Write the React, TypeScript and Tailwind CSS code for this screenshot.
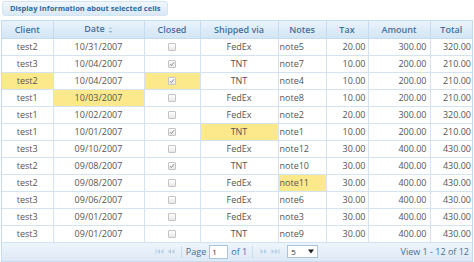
import React from 'react';

type Row = {
  client: string;
  date: string;
  closed: boolean;
  ship: string;
  note: string;
  tax: string;
  amount: string;
  total: string;
  hi?: string[];
};

const rows: Row[] = [
  { client: 'test2', date: '10/31/2007', closed: false, ship: 'FedEx', note: 'note5', tax: '20.00', amount: '300.00', total: '320.00' },
  { client: 'test3', date: '10/04/2007', closed: true, ship: 'TNT', note: 'note7', tax: '10.00', amount: '200.00', total: '210.00' },
  { client: 'test2', date: '10/04/2007', closed: true, ship: 'TNT', note: 'note4', tax: '10.00', amount: '200.00', total: '210.00', hi: ['client', 'closed'] },
  { client: 'test1', date: '10/03/2007', closed: false, ship: 'FedEx', note: 'note8', tax: '10.00', amount: '200.00', total: '210.00', hi: ['date'] },
  { client: 'test1', date: '10/02/2007', closed: false, ship: 'FedEx', note: 'note2', tax: '20.00', amount: '300.00', total: '320.00' },
  { client: 'test1', date: '10/01/2007', closed: true, ship: 'TNT', note: 'note1', tax: '10.00', amount: '200.00', total: '210.00', hi: ['ship'] },
  { client: 'test3', date: '09/10/2007', closed: false, ship: 'FedEx', note: 'note12', tax: '30.00', amount: '400.00', total: '430.00' },
  { client: 'test2', date: '09/08/2007', closed: true, ship: 'TNT', note: 'note10', tax: '30.00', amount: '400.00', total: '430.00' },
  { client: 'test2', date: '09/08/2007', closed: false, ship: 'FedEx', note: 'note11', tax: '30.00', amount: '400.00', total: '430.00', hi: ['note'] },
  { client: 'test3', date: '09/06/2007', closed: false, ship: 'FedEx', note: 'note6', tax: '30.00', amount: '400.00', total: '430.00' },
  { client: 'test3', date: '09/01/2007', closed: false, ship: 'FedEx', note: 'note3', tax: '30.00', amount: '400.00', total: '430.00' },
  { client: 'test3', date: '09/01/2007', closed: false, ship: 'TNT', note: 'note9', tax: '30.00', amount: '400.00', total: '430.00' },
];

const isHi = (r: Row, k: string) => !!r.hi && r.hi.includes(k);

const Check = ({ on }: { on: boolean }) => (
  <span className="inline-flex items-center justify-center w-[8px] h-[8px] border border-[#c4c4c4] rounded-[1px] bg-linear-to-b from-white to-[#e8e8e8] align-middle">
    {on && (
      <svg width="6" height="6" viewBox="0 0 6 6">
        <path d="M1 3.2 L2.4 4.6 L5 1.2" fill="none" stroke="#858585" strokeWidth="1" />
      </svg>
    )}
  </span>
);

const SortIcon = () => (
  <svg width="5" height="8" viewBox="0 0 5 8" className="inline-block ml-[3px] align-middle">
    <path d="M0.5 3 L2.5 1 L4.5 3 Z" fill="#b4cce2" />
    <path d="M0.5 5 L2.5 7 L4.5 5 Z" fill="#8fb3d6" />
  </svg>
);

const SeekFirst = () => (
  <svg width="9" height="7" viewBox="0 0 9 7">
    <rect x="0.5" y="1" width="1" height="5" fill="#b9cfe4" />
    <path d="M5 1 L2 3.5 L5 6 Z" fill="#b9cfe4" />
    <path d="M8.5 1 L5.5 3.5 L8.5 6 Z" fill="#b9cfe4" />
  </svg>
);

const SeekPrev = () => (
  <svg width="8" height="7" viewBox="0 0 8 7">
    <path d="M4 1 L1 3.5 L4 6 Z" fill="#b9cfe4" />
    <path d="M7.5 1 L4.5 3.5 L7.5 6 Z" fill="#b9cfe4" />
  </svg>
);

const SeekNext = () => (
  <svg width="8" height="7" viewBox="0 0 8 7">
    <path d="M0.5 1 L3.5 3.5 L0.5 6 Z" fill="#b9cfe4" />
    <path d="M4 1 L7 3.5 L4 6 Z" fill="#b9cfe4" />
  </svg>
);

const SeekLast = () => (
  <svg width="9" height="7" viewBox="0 0 9 7">
    <path d="M0.5 1 L3.5 3.5 L0.5 6 Z" fill="#b9cfe4" />
    <path d="M4 1 L7 3.5 L4 6 Z" fill="#b9cfe4" />
    <rect x="7.5" y="1" width="1" height="5" fill="#b9cfe4" />
  </svg>
);

const td = 'h-[17px] p-0 border-r border-b border-[#d3e3f1] text-[9px] leading-none text-[#555] whitespace-nowrap overflow-hidden';
const hiBg = 'bg-[#fbe98c]';

export default function App() {
  return (
    <div className="w-[474px] h-[262px] bg-white pl-px pt-px font-['Open_Sans',sans-serif] overflow-hidden">
      <button className="ml-px flex items-center h-[15px] px-[7px] rounded-[3px] border border-[#d3e4f3] bg-linear-to-b from-[#f1f7fd] to-[#d9e8f6] text-[7.5px] font-bold text-[#2d6a9c] leading-none">
        Display Information about selected cells
      </button>

      <div className="mt-[4px] w-[472px] border border-[#c6dbee]">
        <table className="table-fixed border-collapse w-[470px]">
          <colgroup>
            <col className="w-[51px]" />
            <col className="w-[91px]" />
            <col className="w-[56px]" />
            <col className="w-[78px]" />
            <col className="w-[48px]" />
            <col className="w-[42px]" />
            <col className="w-[62px]" />
            <col className="w-[42px]" />
          </colgroup>
          <thead>
            <tr className="bg-linear-to-b from-[#e9f3fc] to-[#d3e5f4]">
              {['Client', 'Date', 'Closed', 'Shipped via', 'Notes', 'Tax', 'Amount', 'Total'].map((h, i) => (
                <th
                  key={h}
                  className={`h-[17px] p-0 border-r border-b border-[#c6dbee] text-[9px] leading-none font-semibold text-[#46709a] text-center ${i === 7 ? 'border-r-0' : ''}`}
                >
                  {h}
                  {h === 'Date' && <SortIcon />}
                </th>
              ))}
            </tr>
          </thead>
          <tbody>
            {rows.map((r, i) => (
              <tr key={i}>
                <td className={`${td} text-center ${isHi(r, 'client') ? hiBg : ''}`}>{r.client}</td>
                <td className={`${td} text-center ${isHi(r, 'date') ? hiBg : ''}`}>{r.date}</td>
                <td className={`${td} text-center ${isHi(r, 'closed') ? hiBg : ''}`}>
                  <Check on={r.closed} />
                </td>
                <td className={`${td} text-center ${isHi(r, 'ship') ? hiBg : ''}`}>{r.ship}</td>
                <td className={`${td} text-left pl-[1px] ${isHi(r, 'note') ? hiBg : ''}`}>{r.note}</td>
                <td className={`${td} text-right pr-[2px]`}>{r.tax}</td>
                <td className={`${td} text-right pr-[3px]`}>{r.amount}</td>
                <td className={`${td} text-right pr-[1px] border-r-0`}>{r.total}</td>
              </tr>
            ))}
          </tbody>
        </table>

        <div className="h-[18px] flex items-center bg-linear-to-b from-[#eef5fc] to-[#dde9f5] text-[9px] text-[#3d6f9c]">
          <div className="flex-1" />
          <div className="flex items-center">
            <span className="flex items-center gap-[3px] px-[2px]">
              <SeekFirst />
              <SeekPrev />
            </span>
            <span className="mx-[4px] w-px h-[12px] bg-[#c9dcee]" />
            <span>Page</span>
            <span className="ml-[3px] w-[19px] h-[14px] border border-[#a9c4dd] bg-white text-[8px] text-[#333] leading-[12px] pl-[2px]">1</span>
            <span className="ml-[3px]">of 1</span>
            <span className="mx-[5px] w-px h-[12px] bg-[#c9dcee]" />
            <span className="flex items-center gap-[3px] px-[2px]">
              <SeekNext />
              <SeekLast />
            </span>
            <span className="ml-[5px] w-[31px] h-[13px] border border-[#a9c4dd] bg-white flex items-center justify-between px-[3px] text-[8px] text-[#333]">
              <span>5</span>
              <svg width="6" height="5" viewBox="0 0 6 5">
                <path d="M0 0.5 L6 0.5 L3 4.5 Z" fill="#222" />
              </svg>
            </span>
          </div>
          <div className="flex-1 text-right pr-[3px] text-[#4a6f92]">View 1 - 12 of 12</div>
        </div>
      </div>
    </div>
  );
}
